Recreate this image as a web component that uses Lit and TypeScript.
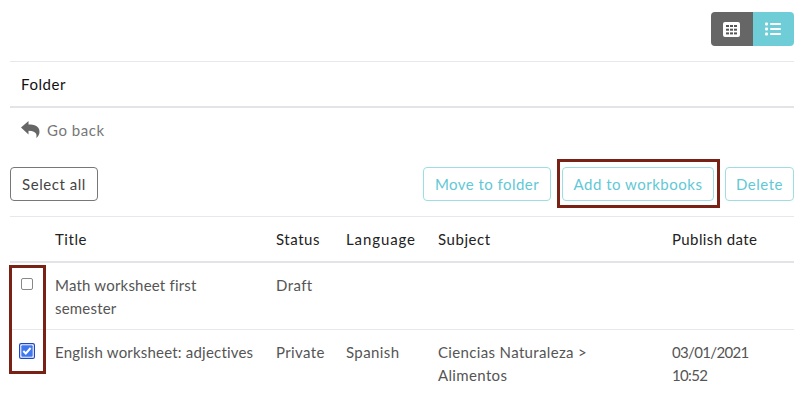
import { LitElement, html, css, svg } from "lit";
import { customElement } from "lit/decorators.js";

@customElement("app-root")
export class AppRoot extends LitElement {
  static styles = css`
    :host { display: block; width: 800px; height: 408px; overflow: hidden; background: #fff; font-family: "Lato", "Open Sans", sans-serif; font-size: 15px; color: #444; letter-spacing: 0.55px; }
    * { box-sizing: border-box; }
    .page { padding: 12px 6px 0 10px; }
    .top { display: flex; justify-content: flex-end; height: 49px; }
    .toggle { display: flex; width: 83px; height: 34px; border-radius: 4px; overflow: hidden; }
    .toggle div { flex: 1; display: flex; align-items: center; justify-content: center; }
    .grid { background: #666; }
    .list { background: #6fcdd8; }
    .folder { border-top: 1px solid #e8e8ec; border-bottom: 2px solid #e3e3e8; height: 47px; padding: 0 11px; display: flex; align-items: center; color: #111; }
    .back { height: 46px; padding: 0 11px 2px; display: flex; align-items: center; gap: 7px; color: #777; }
    .back svg { margin-bottom: 2px; }
    .actions { display: flex; justify-content: space-between; margin-top: 13px; height: 34px; }
    .right { display: flex; gap: 11px; }
    button { font: inherit; letter-spacing: inherit; height: 34px; background: #fff; border-radius: 4px; padding: 0; }
    .select { width: 88px; border: 1px solid #777; color: #444; }
    .cyan { border: 1px solid #9edde5; color: #62c8d6; }
    .move { width: 128px; letter-spacing: 0.45px; }
    .add { width: 152px; letter-spacing: 0.5px; }
    .del { width: 69px; }
    .wrap { position: relative; }
    .mark { position: absolute; border: 3px solid #7a2116; pointer-events: none; }
    .mark.btn { left: -5px; right: -6px; top: -8px; bottom: -7px; }
    .mark.col { left: -1px; top: 49px; width: 37px; height: 109px; }
    .tablewrap { position: relative; margin-top: 15px; }
    table { width: 784px; border-collapse: collapse; table-layout: fixed; border-top: 1px solid #e8e8ec; }
    .c0 { width: 45px; } .c1 { width: 221px; } .c2 { width: 70px; } .c3 { width: 92px; } .c4 { width: 234px; }
    th { font-weight: 400; color: #222; text-align: left; height: 45px; padding: 0; border-bottom: 2px solid #e3e3e8; }
    th.wide { letter-spacing: 0.9px; }
    th.tight { letter-spacing: 0.4px; }
    td { padding: 11px 0 9px; vertical-align: top; line-height: 23px; color: #555; letter-spacing: 0.2px; }
    td.sub { letter-spacing: 0.35px; }
    td.status { letter-spacing: 0.4px; }
    td.date { letter-spacing: -0.65px; }
    tr.first td { border-bottom: 1px solid #e8e8ec; height: 66px; }
    td.check { padding-left: 11px; }
    .box { display: block; width: 12px; height: 12px; margin-top: 4px; border: 1px solid #888; border-radius: 2px; background: #fff; }
    .on { width: 16px; height: 16px; margin: 2px 0 0 -2px; display: block; }
  `;

  render() {
    return html`<div class="page">
      <div class="top">
        <div class="toggle">
          <div class="grid">
            <svg width="17" height="15" viewBox="0 0 17 15">
              <rect width="17" height="15" rx="2" fill="#fff"></rect>
              ${[3, 6.7, 10.4].map((y) => [3, 7, 11].map((x) => svg`<rect x="${x}" y="${y}" width="3" height="2" fill="#555"></rect>`))}
            </svg>
          </div>
          <div class="list">
            <svg width="16" height="14" viewBox="0 0 16 14" fill="#fff">
              <rect x="0" y="0.5" width="3" height="3" rx="1"></rect><rect x="5" y="1" width="11" height="2" rx="1"></rect>
              <rect x="0" y="5.5" width="3" height="3" rx="1"></rect><rect x="5" y="6" width="11" height="2" rx="1"></rect>
              <rect x="0" y="10.5" width="3" height="3" rx="1"></rect><rect x="5" y="11" width="11" height="2" rx="1"></rect>
            </svg>
          </div>
        </div>
      </div>
      <div class="folder">Folder</div>
      <div class="back">
        <svg width="19" height="17" viewBox="0 0 19 17" fill="#666"><path d="M0 6.5 7.500 0v3.600c6 .1 11 1.400 11 7.400 0 2.500-1.600 4.900-3.300 6 .5-1.700 1.900-7-7.700-7.300V13.500z"></path></svg>
        <span>Go back</span>
      </div>
      <div class="actions">
        <button class="select">Select all</button>
        <div class="right">
          <button class="cyan move">Move to folder</button>
          <div class="wrap">
            <button class="cyan add">Add to workbooks</button>
            <div class="mark btn"></div>
          </div>
          <button class="cyan del">Delete</button>
        </div>
      </div>
      <div class="tablewrap">
        <table>
          <colgroup><col class="c0" /><col class="c1" /><col class="c2" /><col class="c3" /><col class="c4" /><col /></colgroup>
          <thead><tr><th></th><th>Title</th><th>Status</th><th class="wide">Language</th><th>Subject</th><th class="tight">Publish date</th></tr></thead>
          <tbody>
            <tr class="first">
              <td class="check"><span class="box"></span></td>
              <td>Math worksheet first<br />semester</td>
              <td class="status">Draft</td><td></td><td></td><td></td>
            </tr>
            <tr>
              <td class="check">
                <svg class="on" viewBox="0 0 16 16">
                  <rect x=".6" y=".6" width="14.800" height="14.800" rx="1.500" fill="#fff" stroke="#1f45c8" stroke-width="1.200"></rect>
                  <rect x="2.300" y="2.300" width="11.400" height="11.400" rx="1" fill="#3f78ee"></rect>
                  <path d="M4.300 8 6.800 10.500 11.600 5" fill="none" stroke="#fff" stroke-width="2"></path>
                </svg>
              </td>
              <td>English worksheet: adjectives</td>
              <td class="status">Private</td><td class="status">Spanish</td>
              <td class="sub">Ciencias Naturaleza &gt;<br />Alimentos</td>
              <td class="date">03/01/2021<br />10:52</td>
            </tr>
          </tbody>
        </table>
        <div class="mark col"></div>
      </div>
    </div>`;
  }
}
